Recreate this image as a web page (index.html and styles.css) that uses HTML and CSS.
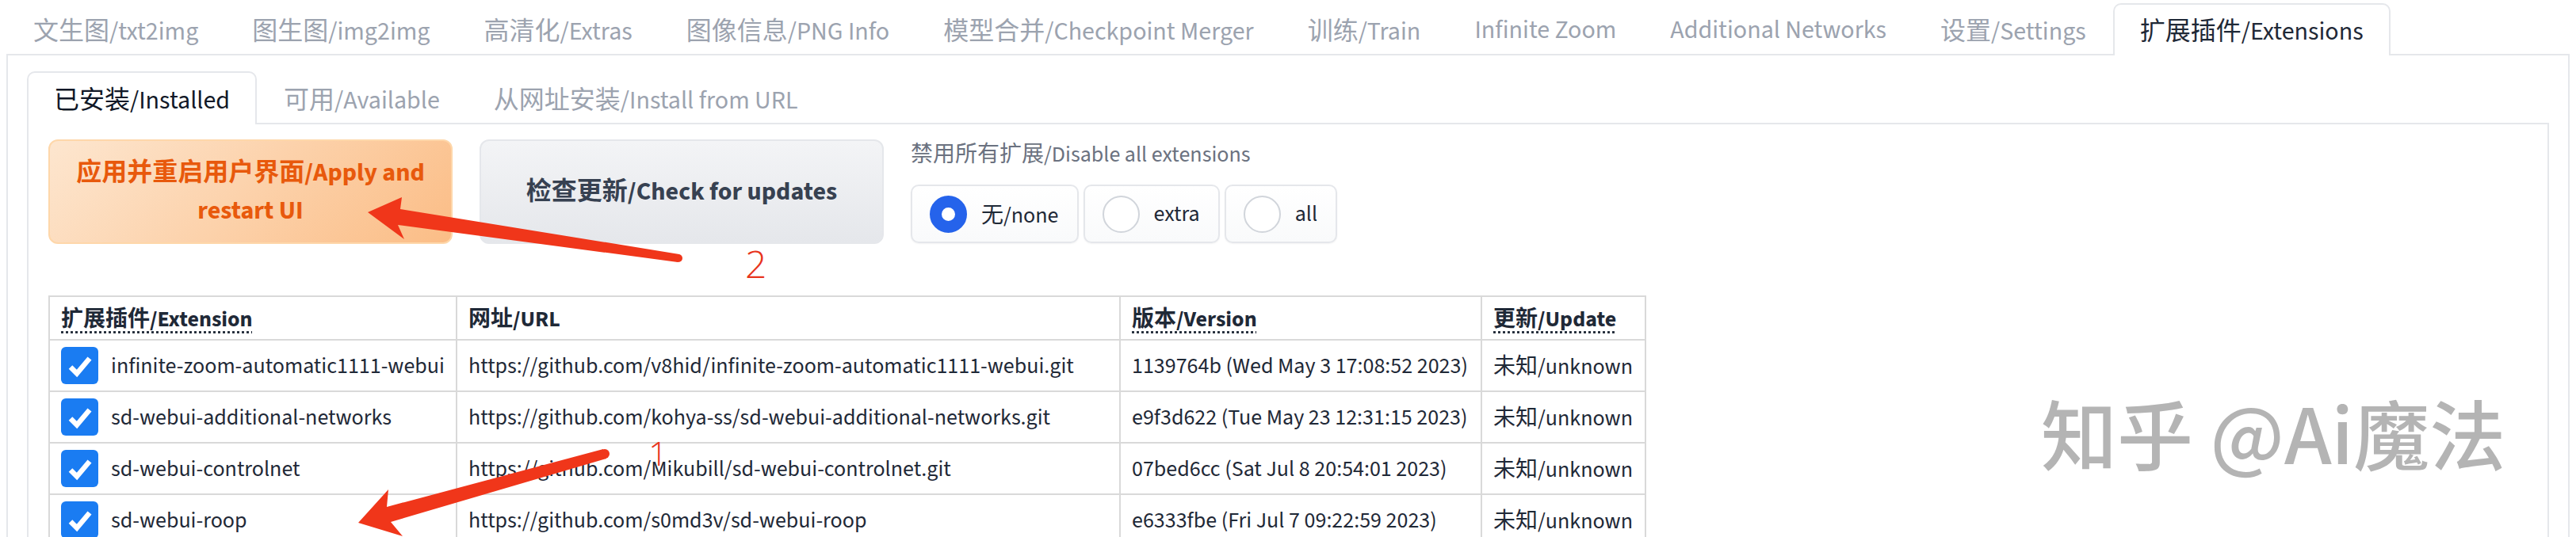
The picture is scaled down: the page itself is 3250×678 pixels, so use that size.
FILE: index.html
```html
<!DOCTYPE html>
<html lang="zh-CN">
<head>
    <meta charset="UTF-8">
    <meta name="viewport" content="width=device-width, initial-scale=1.0">
    <title>Stable Diffusion - Extensions</title>
    <link rel="stylesheet" href="styles.css">
</head>
<body>
    <div class="tab-nav">
        <button class="tab">文生图/txt2img</button>
        <button class="tab">图生图/img2img</button>
        <button class="tab">高清化/Extras</button>
        <button class="tab">图像信息/PNG Info</button>
        <button class="tab">模型合并/Checkpoint Merger</button>
        <button class="tab">训练/Train</button>
        <button class="tab">Infinite Zoom</button>
        <button class="tab">Additional Networks</button>
        <button class="tab">设置/Settings</button>
        <button class="tab selected">扩展插件/Extensions</button>
    </div>

    <div class="tabitem">
        <div class="tab-nav sub-nav">
            <button class="tab selected">已安装/Installed</button>
            <button class="tab">可用/Available</button>
            <button class="tab">从网址安装/Install from URL</button>
        </div>

        <div class="subitem">
            <div class="actions">
                <button class="btn btn-primary">应用并重启用户界面/Apply and restart UI</button>
                <button class="btn btn-secondary">检查更新/Check for updates</button>
                <div class="radio-block">
                    <span class="block-label">禁用所有扩展/Disable all extensions</span>
                    <div class="radio-group">
                        <label class="radio-item"><span class="radio checked"></span>无/none</label>
                        <label class="radio-item"><span class="radio"></span>extra</label>
                        <label class="radio-item"><span class="radio"></span>all</label>
                    </div>
                </div>
            </div>

            <table class="ext-table">
                <colgroup>
                    <col class="col-name">
                    <col class="col-url">
                    <col class="col-version">
                    <col class="col-update">
                </colgroup>
                <thead>
                    <tr>
                        <th><abbr>扩展插件/Extension</abbr></th>
                        <th>网址/URL</th>
                        <th><abbr>版本/Version</abbr></th>
                        <th><abbr>更新/Update</abbr></th>
                    </tr>
                </thead>
                <tbody>
                    <tr>
                        <td><label class="ext-name"><span class="checkbox"><svg viewBox="0 0 16 16"><path d="M3.2 8.6 L6.4 11.8 L12.8 4.2"/></svg></span>infinite-zoom-automatic1111-webui</label></td>
                        <td>https://github.com/v8hid/infinite-zoom-automatic1111-webui.git</td>
                        <td>1139764b (Wed May 3 17:08:52 2023)</td>
                        <td>未知/unknown</td>
                    </tr>
                    <tr>
                        <td><label class="ext-name"><span class="checkbox"><svg viewBox="0 0 16 16"><path d="M3.2 8.6 L6.4 11.8 L12.8 4.2"/></svg></span>sd-webui-additional-networks</label></td>
                        <td>https://github.com/kohya-ss/sd-webui-additional-networks.git</td>
                        <td>e9f3d622 (Tue May 23 12:31:15 2023)</td>
                        <td>未知/unknown</td>
                    </tr>
                    <tr>
                        <td><label class="ext-name"><span class="checkbox"><svg viewBox="0 0 16 16"><path d="M3.2 8.6 L6.4 11.8 L12.8 4.2"/></svg></span>sd-webui-controlnet</label></td>
                        <td>https://github.com/Mikubill/sd-webui-controlnet.git</td>
                        <td>07bed6cc (Sat Jul 8 20:54:01 2023)</td>
                        <td>未知/unknown</td>
                    </tr>
                    <tr>
                        <td><label class="ext-name"><span class="checkbox"><svg viewBox="0 0 16 16"><path d="M3.2 8.6 L6.4 11.8 L12.8 4.2"/></svg></span>sd-webui-roop</label></td>
                        <td>https://github.com/s0md3v/sd-webui-roop</td>
                        <td>e6333fbe (Fri Jul 7 09:22:59 2023)</td>
                        <td>未知/unknown</td>
                    </tr>
                </tbody>
            </table>
        </div>
    </div>

    <!-- annotations drawn over the screenshot -->
    <svg class="arrows" viewBox="0 0 3250 678">
        <polygon points="464,268 507,249 505,264 857,321 855,331 502,284 510,302"/>
        <circle cx="856" cy="326" r="5"/>
        <polygon points="452,660 490,618 488,640 761,567 765,579 493,659 508,677"/>
        <circle cx="763" cy="573" r="6"/>
    </svg>
    <span class="mark mark-2">2</span>
    <span class="mark mark-1">1</span>

    <div class="watermark">知乎 @Ai魔法</div>
</body>
</html>
```

FILE: styles.css
```css
* {
    box-sizing: border-box;
}
html, body {
    height: 678px;
    overflow: hidden;
}
body {
    margin: 4px 8px 0;
    font-family: "Source Sans Pro", "Source Sans 3", "Noto Sans CJK SC", sans-serif;
    background: #fff;
    color: #1f2937;
}

/* tabs */
.tab-nav {
    display: flex;
    align-items: flex-end;
    height: 66px;
    margin-bottom: -2px;
    position: relative;
    z-index: 1;
}
.tab {
    font: inherit;
    font-size: 32px;
    color: #9ca3af;
    background: none;
    height: 66px;
    padding: 0 32px;
    border: 2px solid transparent;
    border-bottom: none;
    border-radius: 10px 10px 0 0;
    white-space: nowrap;
    cursor: pointer;
}
.tab.selected {
    color: #1f2937;
    background: #fff;
    border-color: #e5e7eb;
}
.sub-nav {
    height: 67px;
}
.sub-nav .tab {
    height: 67px;
}
.sub-nav .tab.selected {
    color: #111827;
}
.tabitem {
    border: 2px solid #e5e7eb;
    height: 620px;
    padding: 20px 24px;
}
.subitem {
    border: 2px solid #e5e7eb;
    height: 600px;
    padding: 19px 25px;
}

/* buttons and radios */
.actions {
    display: flex;
    gap: 34px;
}
.btn {
    font: inherit;
    font-size: 32px;
    font-weight: 700;
    line-height: 48px;
    width: 510px;
    height: 132px;
    padding: 0 24px;
    border-radius: 12px;
    cursor: pointer;
}
.btn-primary {
    color: #e8590c;
    border: 2px solid #fed7aa;
    background: linear-gradient(135deg, #fde6cf, #fbbd86);
}
.btn-secondary {
    color: #374151;
    border: 2px solid #e5e7eb;
    background: linear-gradient(180deg, #f3f4f6, #e5e7eb);
}
.radio-block {
    display: flex;
    flex-direction: column;
    padding-top: 1px;
}
.block-label {
    font-size: 28px;
    line-height: 36px;
    color: #6b7280;
}
.radio-group {
    display: flex;
    gap: 6px;
    margin-top: 20px;
}
.radio-item {
    display: flex;
    align-items: center;
    gap: 18px;
    height: 74px;
    padding: 0 23px 0 22px;
    font-size: 28px;
    color: #1f2937;
    border: 2px solid #e5e7eb;
    border-radius: 10px;
    background: linear-gradient(180deg, #fff, #f9fafb);
    box-shadow: 0 1px 2px rgba(0, 0, 0, 0.05);
}
.radio {
    width: 47px;
    height: 47px;
    border-radius: 50%;
    border: 2px solid #d1d5db;
    background: #fff;
}
.radio.checked {
    border: 15px solid #2563eb;
}

/* extension table */
.ext-table {
    margin-top: 65px;
    width: 2014px;
    table-layout: fixed;
    border-collapse: collapse;
    font-size: 28px;
    color: #1f2937;
    white-space: nowrap;
}
.col-name { width: 514px; }
.col-url { width: 837px; }
.col-version { width: 456px; }
.col-update { width: 207px; }
.ext-table th,
.ext-table td {
    border: 2px solid #d9d9d9;
    text-align: left;
    padding: 8px 14px;
    overflow: hidden;
}
.ext-table th {
    height: 55px;
    padding: 0 14px;
    font-weight: 700;
}
.ext-table td {
    height: 65px;
}
.ext-table abbr {
    text-decoration: underline dotted;
    text-underline-offset: 6px;
}
.ext-name {
    display: flex;
    align-items: center;
    gap: 16px;
}
.checkbox {
    width: 47px;
    height: 47px;
    border-radius: 6px;
    background: #1a7cf2;
    display: flex;
    align-items: center;
    justify-content: center;
}
.checkbox svg {
    width: 40px;
    height: 40px;
    fill: none;
    stroke: #fff;
    stroke-width: 2.6;
}

/* overlays */
.arrows {
    position: absolute;
    left: 0;
    top: 0;
    width: 3250px;
    height: 678px;
    fill: #f0361a;
    pointer-events: none;
}
.mark {
    position: absolute;
    font-family: "Open Sans", sans-serif;
    font-weight: 300;
    line-height: 1;
    color: #e8341c;
}
.mark-2 {
    left: 940px;
    top: 309px;
    font-size: 48px;
}
.mark-1 {
    left: 818px;
    top: 550px;
    font-size: 43px;
}
.watermark {
    position: absolute;
    left: 2575px;
    top: 497px;
    font-size: 96px;
    line-height: 1;
    font-weight: 500;
    font-family: "Noto Sans CJK SC", sans-serif;
    color: #b4b4b4;
    white-space: nowrap;
}
```
